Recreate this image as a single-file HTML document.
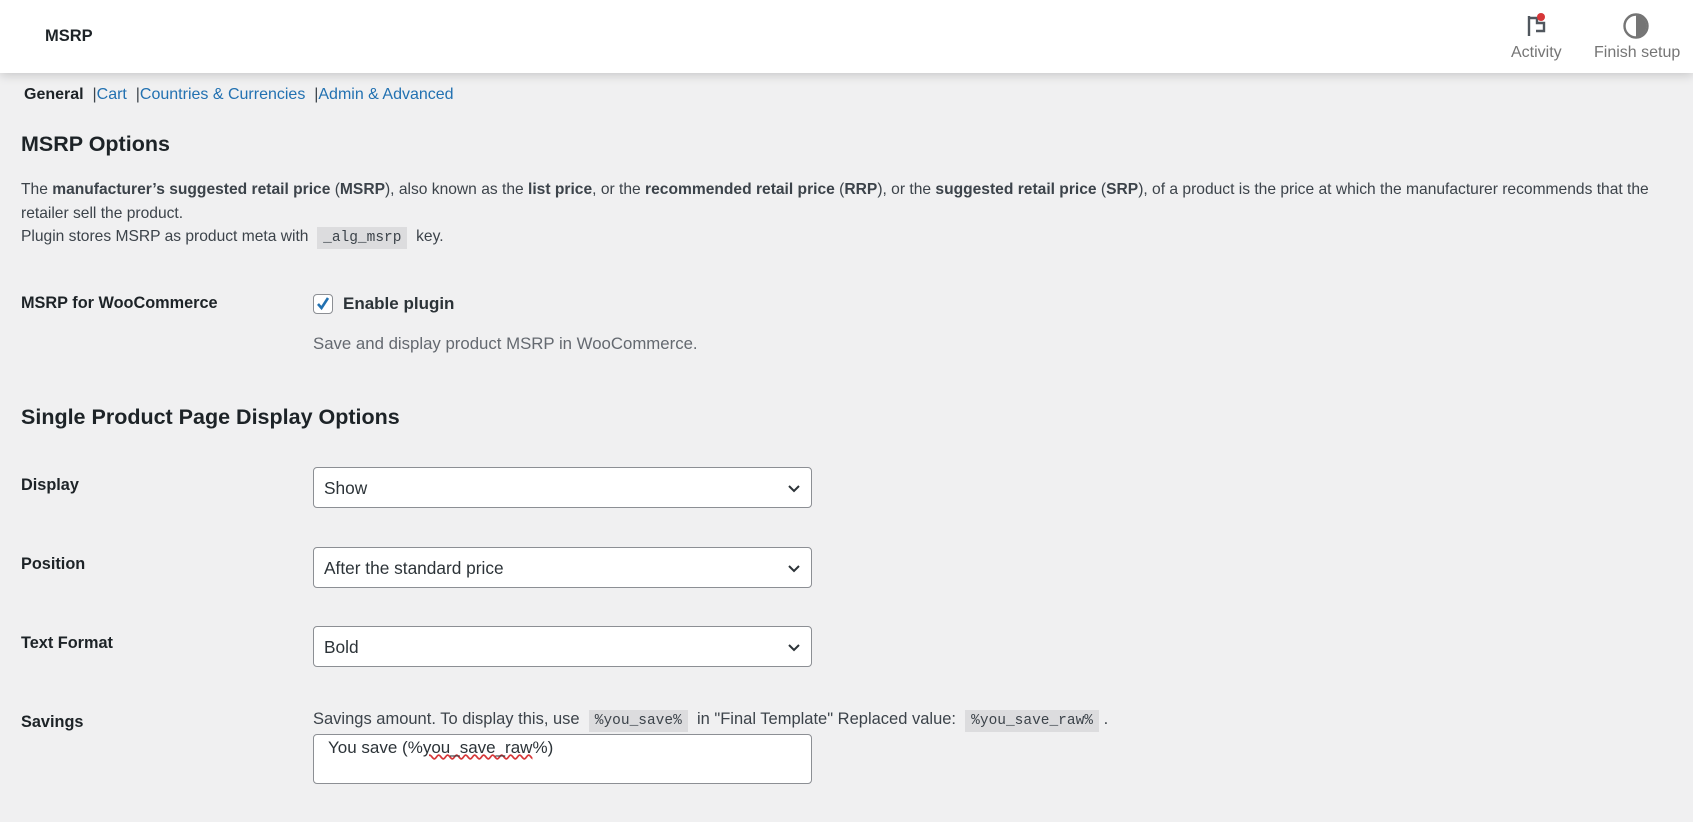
<!DOCTYPE html>
<html><head><meta charset="utf-8"><style>
*{box-sizing:border-box;margin:0;padding:0}
body{width:1693px;height:822px;overflow:hidden;background:#f0f0f1;font-family:"Liberation Sans",sans-serif;color:#3c434a;position:relative}
.hdr{position:absolute;left:0;top:0;width:1693px;height:73px;background:#fff;box-shadow:0 2px 10px rgba(0,0,0,.18)}
.a{position:absolute;white-space:nowrap}
.code{font-family:"Liberation Mono",monospace;background:#dcdcde;padding:3px 6px;font-size:14.5px;color:#3c434a}
.lbl{font-weight:bold;font-size:16.3px;color:#1d2327}
.sel{position:absolute;left:313px;width:499px;height:41px;background:#fff;border:1px solid #8c8f94;border-radius:4px;font-size:17.3px;color:#2c3338;padding:10px 10px;}
.sel svg{position:absolute;right:10px;top:13px}
.lnk{color:#2271b1}
</style></head><body>
<div class="hdr">
<div class="a" style="left:45px;top:27px;font-size:16.5px;font-weight:bold;color:#1d2327">MSRP</div>
<svg class="a" style="left:1526px;top:12px" width="24" height="26" viewBox="0 0 24 26"><path d="M3 4v20M3 6h8v5h7v8h-8" fill="none" stroke="#50575e" stroke-width="2.4"/><circle cx="15" cy="5" r="4" fill="#d63638"/></svg>
<div class="a" style="left:1511px;top:44px;font-size:16px;color:#757575">Activity</div>
<svg class="a" style="left:1622px;top:12px" width="28" height="28" viewBox="0 0 28 28"><circle cx="14" cy="14" r="11.5" fill="none" stroke="#757575" stroke-width="2.4"/><path d="M14 3.5a10.5 10.5 0 0 1 0 21z" fill="#757575"/></svg>
<div class="a" style="left:1594px;top:44px;font-size:16px;color:#757575">Finish setup</div>
</div>
<div class="a" style="left:24px;top:86px;font-size:16px"><b style="color:#1d2327">General</b> &nbsp;|<span class="lnk">Cart</span> &nbsp;|<span class="lnk">Countries &amp; Currencies</span> &nbsp;|<span class="lnk">Admin &amp; Advanced</span></div>
<div class="a" style="left:21px;top:132px;font-size:21.5px;font-weight:bold;color:#1d2327">MSRP Options</div>
<div class="a" style="left:21px;top:178px;font-size:15.6px;line-height:23.6px">The <b>manufacturer’s suggested retail price</b> (<b>MSRP</b>), also known as the <b>list price</b>, or the <b>recommended retail price</b> (<b>RRP</b>), or the <b>suggested retail price</b> (<b>SRP</b>), of a product is the price at which the manufacturer recommends that the<br>retailer sell the product.<br>Plugin stores MSRP as product meta with &nbsp;<span class="code">_alg_msrp</span>&nbsp; key.</div>
<div class="a lbl" style="left:21px;top:294px">MSRP for WooCommerce</div>
<div class="a" style="left:313px;top:294px;width:20px;height:20px;border:1px solid #8c8f94;border-radius:4px;background:#fff"><svg width="18" height="18" viewBox="0 0 18 18"><path d="M4 9l3.5 4L14 3" fill="none" stroke="#2271b1" stroke-width="2.6"/></svg></div>
<div class="a" style="left:343px;top:294px;font-size:17px;font-weight:bold;color:#2c3338">Enable plugin</div>
<div class="a" style="left:313px;top:334px;font-size:16.8px;color:#646970">Save and display product MSRP in WooCommerce.</div>
<div class="a" style="left:21px;top:405px;font-size:21.5px;font-weight:bold;color:#1d2327">Single Product Page Display Options</div>
<div class="a lbl" style="left:21px;top:476px">Display</div>
<div class="sel" style="top:467px">Show<svg width="14" height="14" viewBox="0 0 14 14"><path d="M2 5l5 5 5-5" fill="none" stroke="#2c3338" stroke-width="2"/></svg></div>
<div class="a lbl" style="left:21px;top:555px">Position</div>
<div class="sel" style="top:547px">After the standard price<svg width="14" height="14" viewBox="0 0 14 14"><path d="M2 5l5 5 5-5" fill="none" stroke="#2c3338" stroke-width="2"/></svg></div>
<div class="a lbl" style="left:21px;top:634px">Text Format</div>
<div class="sel" style="top:626px">Bold<svg width="14" height="14" viewBox="0 0 14 14"><path d="M2 5l5 5 5-5" fill="none" stroke="#2c3338" stroke-width="2"/></svg></div>
<div class="a lbl" style="left:21px;top:713px">Savings</div>
<div class="a" style="left:313px;top:710px;font-size:16.5px;color:#3c434a">Savings amount. To display this, use &nbsp;<span class="code">%you_save%</span>&nbsp; in "Final Template" Replaced value: &nbsp;<span class="code">%you_save_raw%</span>&nbsp;.</div>
<div class="a" style="left:313px;top:734px;width:499px;height:50px;background:#fff;border:1px solid #8c8f94;border-radius:4px;font-size:17px;color:#2c3338;padding:3px 14px">You save (%<span style="text-decoration:underline wavy #d63638">you_save_raw</span>%)</div>
</body></html>
